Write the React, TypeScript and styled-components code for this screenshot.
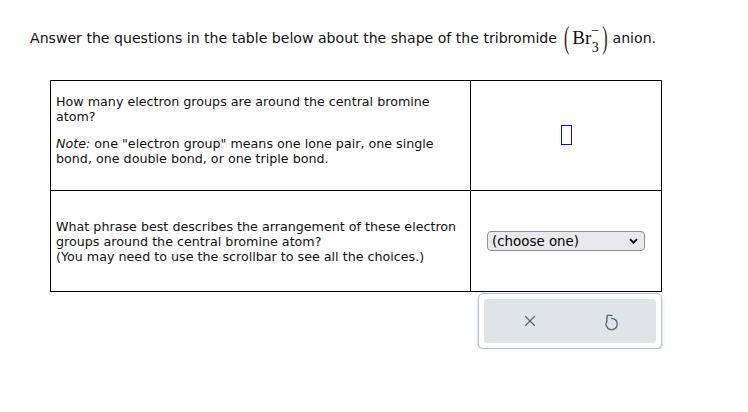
import React from "react";
import styled, { createGlobalStyle } from "styled-components";
import { X } from "lucide-react";

const GlobalStyle = createGlobalStyle`
  html, body {
    margin: 0;
    padding: 0;
    background: #fff;
  }
  body {
    font-family: "DejaVu Sans", Verdana, sans-serif;
    color: #000;
  }
`;

const Page = styled.div`
    padding: 22px 0 0 30px;
  `,
  Heading = styled.p`
    margin: 0;
    font-size: 14.1px;
    line-height: 32px;
    display: flex;
    align-items: center;
    color: #111;
  `,
  Formula = styled.span`
    display: inline-flex;
    align-items: center;
    margin: 0 5px 0 7px;
    font-family: "Liberation Serif", "Times New Roman", serif;
  `,
  Paren = styled.span`
    display: inline-block;
    font-size: 16px;
    font-weight: 300;
    transform: scaleY(2);
    color: #222;
  `,
  Symbol = styled.span`
    font-size: 19px;
    padding: 0 0 0 3px;
  `,
  Ion = styled.span`
    display: inline-flex;
    flex-direction: column;
    align-items: center;
    font-size: 14px;
    line-height: 10px;
    margin-right: 3px;
    .charge {
      transform: translateY(-2px);
    }
    .count {
      transform: translateY(5px);
    }
  `,
  Sheet = styled.div`
    width: 612px;
    margin: 26px 0 0 20px;
    display: flex;
    flex-direction: column;
  `,
  Table = styled.table`
    border-collapse: collapse;
    width: 612px;
    font-size: 12.7px;
    line-height: 15px;
    td {
      border: 1px solid #000;
      padding: 0 5px;
    }
  `,
  Question = styled.td<{ $height: number; $lift?: number }>`
    width: 409px;
    height: ${(p) => p.$height}px;
    vertical-align: middle;
    color: #111;
    && {
      padding-bottom: ${(p) => p.$lift ?? 0}px;
    }
    p {
      margin: 0;
    }
    p + p {
      margin-top: 12px;
    }
  `,
  Answer = styled.td`
    text-align: center;
    vertical-align: middle;
  `,
  Blank = styled.span`
    display: inline-block;
    width: 9px;
    height: 18px;
    border: 1px solid #1010d0;
    margin-top: 2px;
  `,
  Select = styled.div`
    box-sizing: border-box;
    width: 158px;
    height: 20px;
    margin: 0 0 0 11px;
    padding: 0 5px 0 4px;
    display: flex;
    align-items: center;
    justify-content: space-between;
    background: #e9e9ed;
    border: 1px solid #8f8f9d;
    border-radius: 4px;
    font-size: 13.4px;
    color: #000;
    text-align: left;
  `,
  Toolbar = styled.div`
    align-self: flex-end;
    box-sizing: border-box;
    width: 184px;
    height: 56px;
    margin-top: 1px;
    padding: 5px;
    border: 1px solid #b4c2c7;
    border-radius: 5px;
    background: #fff;
    box-shadow: 0 2px 4px rgba(80, 100, 110, 0.25);
  `,
  ToolRow = styled.div`
    height: 100%;
    display: flex;
    align-items: center;
    justify-content: space-around;
    background: #dfe5e7;
    border-radius: 3px;
    color: #4d6b78;
    padding: 0 4px;
  `,
  ToolButton = styled.button`
    border: 0;
    background: transparent;
    color: inherit;
    display: flex;
    padding: 0;
  `;

const Chevron = () => (
  <svg width="11" height="10" viewBox="0 0 11 10">
    <path d="M2 3.2 L5.5 6.7 L9 3.2" stroke="#000" strokeWidth="1.8" fill="none" />
  </svg>
);

const UndoIcon = () => (
  <svg width="15" height="19" viewBox="0 0 16 19" fill="none" stroke="currentColor"
    strokeWidth="1.45" strokeLinecap="round" strokeLinejoin="round">
    <path d="M8 6.2 A6 6 0 1 1 3 9.2" />
    <path d="M3 9.2 L3.4 3 H8.5" />
  </svg>
);

const App: React.FC = () => (
  <>
    <GlobalStyle />
    <Page>
      <Heading>
        Answer the questions in the table below about the shape of the
        tribromide
        <Formula>
          <Paren>(</Paren>
          <Symbol>Br</Symbol>
          <Ion>
            <span className="charge">−</span>
            <span className="count">3</span>
          </Ion>
          <Paren>)</Paren>
        </Formula>
        anion.
      </Heading>
      <Sheet>
        <Table>
          <tbody>
            <tr>
              <Question $height={97} $lift={12}>
                <p>How many electron groups are around the central bromine atom?</p>
                <p>
                  <i>Note:</i> one "electron group" means one lone pair, one single
                  bond, one double bond, or one triple bond.
                </p>
              </Question>
              <Answer>
                <Blank />
              </Answer>
            </tr>
            <tr>
              <Question $height={100}>
                <p>
                  What phrase best describes the arrangement of these electron
                  groups around the central bromine atom?
                  <br />
                  (You may need to use the scrollbar to see all the choices.)
                </p>
              </Question>
              <Answer>
                <Select>
                  (choose one)
                  <Chevron />
                </Select>
              </Answer>
            </tr>
          </tbody>
        </Table>
        <Toolbar>
          <ToolRow>
            <ToolButton>
              <X size={18} strokeWidth={1.6} />
            </ToolButton>
            <ToolButton>
              <UndoIcon />
            </ToolButton>
          </ToolRow>
        </Toolbar>
      </Sheet>
    </Page>
  </>
);

export default App;
